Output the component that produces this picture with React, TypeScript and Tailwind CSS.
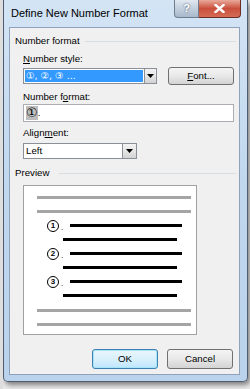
import React from "react";

const font = { fontFamily: '"Liberation Sans", "DejaVu Sans", sans-serif' };

function Arrow() {
  return (
    <svg width="7" height="4" viewBox="0 0 7 4">
      <path d="M0 0 L7 0 L3.5 4 Z" fill="#000" />
    </svg>
  );
}

function DropBtn({ w }: { w: string }) {
  return (
    <div
      className={`${w} h-full flex items-center justify-center border-l border-[#8a8f99] bg-gradient-to-b from-[#f3f3f3] via-[#e6e6e6] to-[#d2d2d2]`}
    >
      <Arrow />
    </div>
  );
}

function Circ({ n }: { n: string }) {
  return (
    <div className="w-[12px] h-[12px] rounded-full border border-black flex items-center justify-center text-[8px] leading-none font-bold text-black">
      {n}
    </div>
  );
}

function Item({ n }: { n: string }) {
  return (
    <>
      <div className="h-[13px] flex items-center pl-[23px]">
        <Circ n={n} />
        <span className="text-[8px] leading-none mt-[5px] ml-[2px] w-[9px]">.</span>
        <div className="w-[112px] h-[3px] bg-black" />
      </div>
      <div className="h-[15px] flex items-center pl-[39px]">
        <div className="w-[114px] h-[3px] bg-black" />
      </div>
    </>
  );
}

export default function App() {
  return (
    <div
      className="w-[250px] h-[389px] overflow-hidden bg-[#e9e9e9] relative"
      style={font}
    >
      <div className="absolute left-0 top-0 w-[3px] h-full bg-[#dedede]" />
      <div className="ml-[3px] w-[245px] h-[382px] border border-t-0 border-[#4e5d70] rounded-b-[5px] bg-gradient-to-b from-[#d3e4f5] via-[#c0d7ee] to-[#bad2eb] flex flex-col shadow-[2px_3px_5px_rgba(0,0,0,0.45)]">
        {/* title bar */}
        <div className="h-[27px] flex items-start shrink-0">
          <div className="pl-[7px] pt-[6px] text-[11px] leading-[14px] text-black">
            Define New Number Format
          </div>
          <div className="flex-1" />
          <div className="flex mr-[6px]">
            <div className="w-[25px] h-[18px] border border-t-0 border-[#6f7d8e] rounded-bl-[4px] bg-gradient-to-b from-[#e1e8f0] via-[#c3cfdd] to-[#a8b8cc] flex items-center justify-center text-[11px] font-bold text-white leading-none [text-shadow:0_0_2px_#3d4b5c]">
              ?
            </div>
            <div className="w-[42px] h-[18px] border border-t-0 border-l-0 border-[#6b2d25] rounded-br-[4px] bg-gradient-to-b from-[#e9a99a] via-[#c94f3c] to-[#d46c55] flex items-center justify-center">
              <svg width="11" height="9" viewBox="0 0 11 9">
                <path d="M1.5 1 L9.5 8 M9.5 1 L1.5 8" stroke="#fff" strokeWidth="2.4" strokeLinecap="square" />
              </svg>
            </div>
          </div>
        </div>
        {/* content */}
        <div className="ml-[5px] w-[231px] h-[348px] border border-[#8ea3bb] bg-[#f0f0f0] text-[9.7px] leading-[14px] text-black flex flex-col">
          <div className="flex items-center pl-[5px] pt-[6px] pr-[3px]">
            <span>Number format</span>
            <div className="flex-1 ml-[5px] h-px bg-[#d8dde3]" />
          </div>
          <div className="pl-[13px] mt-[4px]">
            <span className="underline">N</span>umber style:
          </div>
          <div className="flex pl-[13px] mt-[1px] items-start">
            <div className="w-[134px] h-[16px] mt-[1px] border border-[#8a8f99] bg-white flex">
              <div className="flex-1 m-[1px] bg-[#3399ff] text-white text-[9.5px] leading-[12px] pl-[1px] whitespace-nowrap overflow-hidden" style={{ fontFamily: '"DejaVu Sans", sans-serif' }}>
                ①, ②, ③ ...
              </div>
              <DropBtn w="w-[12px]" />
            </div>
            <div className="ml-[11px] w-[66px] h-[18px] rounded-[3px] border border-[#707070] bg-gradient-to-b from-[#f4f4f4] via-[#e8e8e8] to-[#d3d3d3] flex items-center justify-center">
              <span>
                <span className="underline">F</span>ont...
              </span>
            </div>
          </div>
          <div className="pl-[13px] mt-[5px]">
            Number f<span className="underline">o</span>rmat:
          </div>
          <div className="ml-[13px] w-[211px] h-[18px] border border-[#abadb3] bg-white flex items-center pl-[2px]">
            <span className="bg-[#bdbdbd] text-[13px] leading-[14px]" style={{ fontFamily: '"DejaVu Sans", sans-serif' }}>
              ①
            </span>
            <span>.</span>
          </div>
          <div className="pl-[13px] mt-[4px]">
            Align<span className="underline">m</span>ent:
          </div>
          <div className="ml-[13px] mt-[3px] w-[114px] h-[16px] border border-[#8a8f99] bg-white flex">
            <div className="flex-1 pl-[2px] leading-[14px]">Left</div>
            <DropBtn w="w-[14px]" />
          </div>
          <div className="flex items-center pl-[5px] pr-[3px] mt-[7px]">
            <span>Preview</span>
            <div className="flex-1 ml-[10px] h-px bg-[#d8dde3]" />
          </div>
          <div className="ml-[13px] mt-[5px] w-[174px] h-[150px] border border-[#a0a0a0] bg-white flex flex-col pt-[4px]">
            <div className="h-[14px] flex items-center pl-[13px]">
              <div className="w-[154px] h-[3px] bg-[#a5a5a5]" />
            </div>
            <div className="h-[15px] flex items-center pl-[13px]">
              <div className="w-[154px] h-[3px] bg-[#a5a5a5]" />
            </div>
            <Item n="1" />
            <Item n="2" />
            <Item n="3" />
            <div className="h-[14px] flex items-center pl-[13px]">
              <div className="w-[154px] h-[3px] bg-[#a5a5a5]" />
            </div>
            <div className="h-[14px] flex items-center pl-[13px]">
              <div className="w-[154px] h-[3px] bg-[#a5a5a5]" />
            </div>
          </div>
          <div className="flex mt-[14px] pl-[82px]">
            <div className="w-[66px] h-[20px] rounded-[3px] border border-[#3c7fb1] bg-gradient-to-b from-[#eaf6fd] via-[#d9f0fc] to-[#bee6fd] shadow-[inset_0_0_0_1px_#a8e4f8] flex items-center justify-center">
              OK
            </div>
            <div className="ml-[9px] w-[66px] h-[20px] rounded-[3px] border border-[#707070] bg-gradient-to-b from-[#f4f4f4] via-[#e8e8e8] to-[#d3d3d3] flex items-center justify-center">
              Cancel
            </div>
          </div>
        </div>
      </div>
    </div>
  );
}
